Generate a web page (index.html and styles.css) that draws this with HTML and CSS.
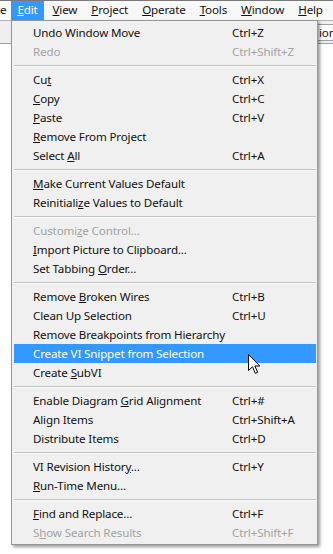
FILE: index.html
```html
<!DOCTYPE html>
<html>
<head>
<meta charset="utf-8">
<link rel="stylesheet" href="styles.css">
</head>
<body>
<div class="menubar">
  <span class="mb-item mb-cut">e</span>
  <span class="mb-item active"><u>E</u>dit</span>
  <span class="mb-item"><u>V</u>iew</span>
  <span class="mb-item"><u>P</u>roject</span>
  <span class="mb-item"><u>O</u>perate</span>
  <span class="mb-item"><u>T</u>ools</span>
  <span class="mb-item"><u>W</u>indow</span>
  <span class="mb-item"><u>H</u>elp</span>
</div>
<div class="toolbar">
  <div class="fontbox">ion</div>
</div>
<div class="canvas"></div>

<div class="dropdown">
  <div class="item"><span class="label">Undo Window Move</span><span class="key">Ctrl+Z</span></div>
  <div class="item disabled"><span class="label">Redo</span><span class="key">Ctrl+Shift+Z</span></div>
  <div class="sep"></div>
  <div class="item"><span class="label">Cu<u>t</u></span><span class="key">Ctrl+X</span></div>
  <div class="item"><span class="label"><u>C</u>opy</span><span class="key">Ctrl+C</span></div>
  <div class="item"><span class="label"><u>P</u>aste</span><span class="key">Ctrl+V</span></div>
  <div class="item"><span class="label"><u>R</u>emove From Project</span><span class="key"></span></div>
  <div class="item"><span class="label">Select <u>A</u>ll</span><span class="key">Ctrl+A</span></div>
  <div class="sep"></div>
  <div class="item"><span class="label"><u>M</u>ake Current Values Default</span><span class="key"></span></div>
  <div class="item"><span class="label">Reinitiali<u>z</u>e Values to Default</span><span class="key"></span></div>
  <div class="sep"></div>
  <div class="item disabled"><span class="label">Customi<u>z</u>e Control...</span><span class="key"></span></div>
  <div class="item"><span class="label"><u>I</u>mport Picture to Clipboard...</span><span class="key"></span></div>
  <div class="item"><span class="label">Set Tabbing <u>O</u>rder...</span><span class="key"></span></div>
  <div class="sep"></div>
  <div class="item"><span class="label">Remove <u>B</u>roken Wires</span><span class="key">Ctrl+B</span></div>
  <div class="item"><span class="label">Clean Up Selection</span><span class="key">Ctrl+U</span></div>
  <div class="item"><span class="label">Remove Breakpoints from Hierarchy</span><span class="key"></span></div>
  <div class="item hover"><span class="label">Create VI Snippet from Selection</span><span class="key"></span></div>
  <div class="item"><span class="label">Create <u>S</u>ubVI</span><span class="key"></span></div>
  <div class="sep"></div>
  <div class="item"><span class="label">Enable Diagram <u>G</u>rid Alignment</span><span class="key">Ctrl+#</span></div>
  <div class="item"><span class="label">Align Items</span><span class="key">Ctrl+Shift+A</span></div>
  <div class="item"><span class="label">Distribute Items</span><span class="key">Ctrl+D</span></div>
  <div class="sep"></div>
  <div class="item"><span class="label">VI Revision Histor<u>y</u>...</span><span class="key">Ctrl+Y</span></div>
  <div class="item"><span class="label"><u>R</u>un-Time Menu...</span><span class="key"></span></div>
  <div class="sep"></div>
  <div class="item"><span class="label"><u>F</u>ind and Replace...</span><span class="key">Ctrl+F</span></div>
  <div class="item disabled"><span class="label">S<u>h</u>ow Search Results</span><span class="key">Ctrl+Shift+F</span></div>
</div>

<svg class="cursor" width="13" height="21" viewBox="0 0 13 21">
  <path d="M0.5 0.5 L0.5 16.5 L4.5 12.8 L7.3 19.3 L9.6 18.3 L6.9 12 L11.8 12 Z" fill="#fff" stroke="#000" stroke-width="1" stroke-linejoin="miter"/>
</svg>
</body>
</html>
```
FILE: styles.css
```css
html, body {
  margin: 0;
  padding: 0;
  width: 333px;
  height: 554px;
  overflow: hidden;
  background: #ffffff;
  font-family: "Noto Sans", "Open Sans", sans-serif;
  font-size: 11.6px;
  letter-spacing: -0.15px;
  color: #111;
}

.menubar {
  display: flex;
  height: 19px;
  border-top: 1px solid #7a7a7a;
  background: #f8f8f8;
  line-height: 18px;
  white-space: nowrap;
}

.mb-item {
  padding: 0 7px;
}

.mb-cut {
  padding: 0 5px 0 0;
}

.mb-item.active {
  background: #3399ff;
  color: #fff;
  padding: 0 6px;
  margin-right: 2px;
}

.toolbar {
  display: flex;
  justify-content: flex-end;
  align-items: flex-start;
  height: 22px;
  border-top: 1px solid #b5b5b5;
  border-bottom: 1px solid #a0a0a0;
  background: #efefef;
}

.fontbox {
  margin-top: 3px;
  width: 14px;
  height: 15px;
  overflow: hidden;
  white-space: nowrap;
  background: #fff;
  border: 1px solid #a0a0a0;
  border-right: none;
  line-height: 15px;
  padding-left: 1px;
}

.dropdown {
  position: absolute;
  left: 11px;
  top: 20px;
  width: 307px;
  box-sizing: border-box;
  padding: 2px 1px 2px 2px;
  background: #f0f0f0;
  border: 1px solid #979797;
  box-shadow: 2px 2px 3px rgba(0, 0, 0, 0.4);
}

.item {
  display: grid;
  grid-template-columns: 199px auto;
  height: 19px;
  line-height: 19px;
  padding-left: 19px;
  white-space: nowrap;
}

.item.disabled {
  color: #a3a3a3;
}

.item.hover {
  background: #3399ff;
  color: #fff;
}

.sep {
  height: 0;
  margin: 4px 0 3px 0;
  border-top: 1px solid #c4c4c4;
  border-bottom: 1px solid #fbfbfb;
}

.cursor {
  position: absolute;
  left: 248px;
  top: 354px;
}
```
